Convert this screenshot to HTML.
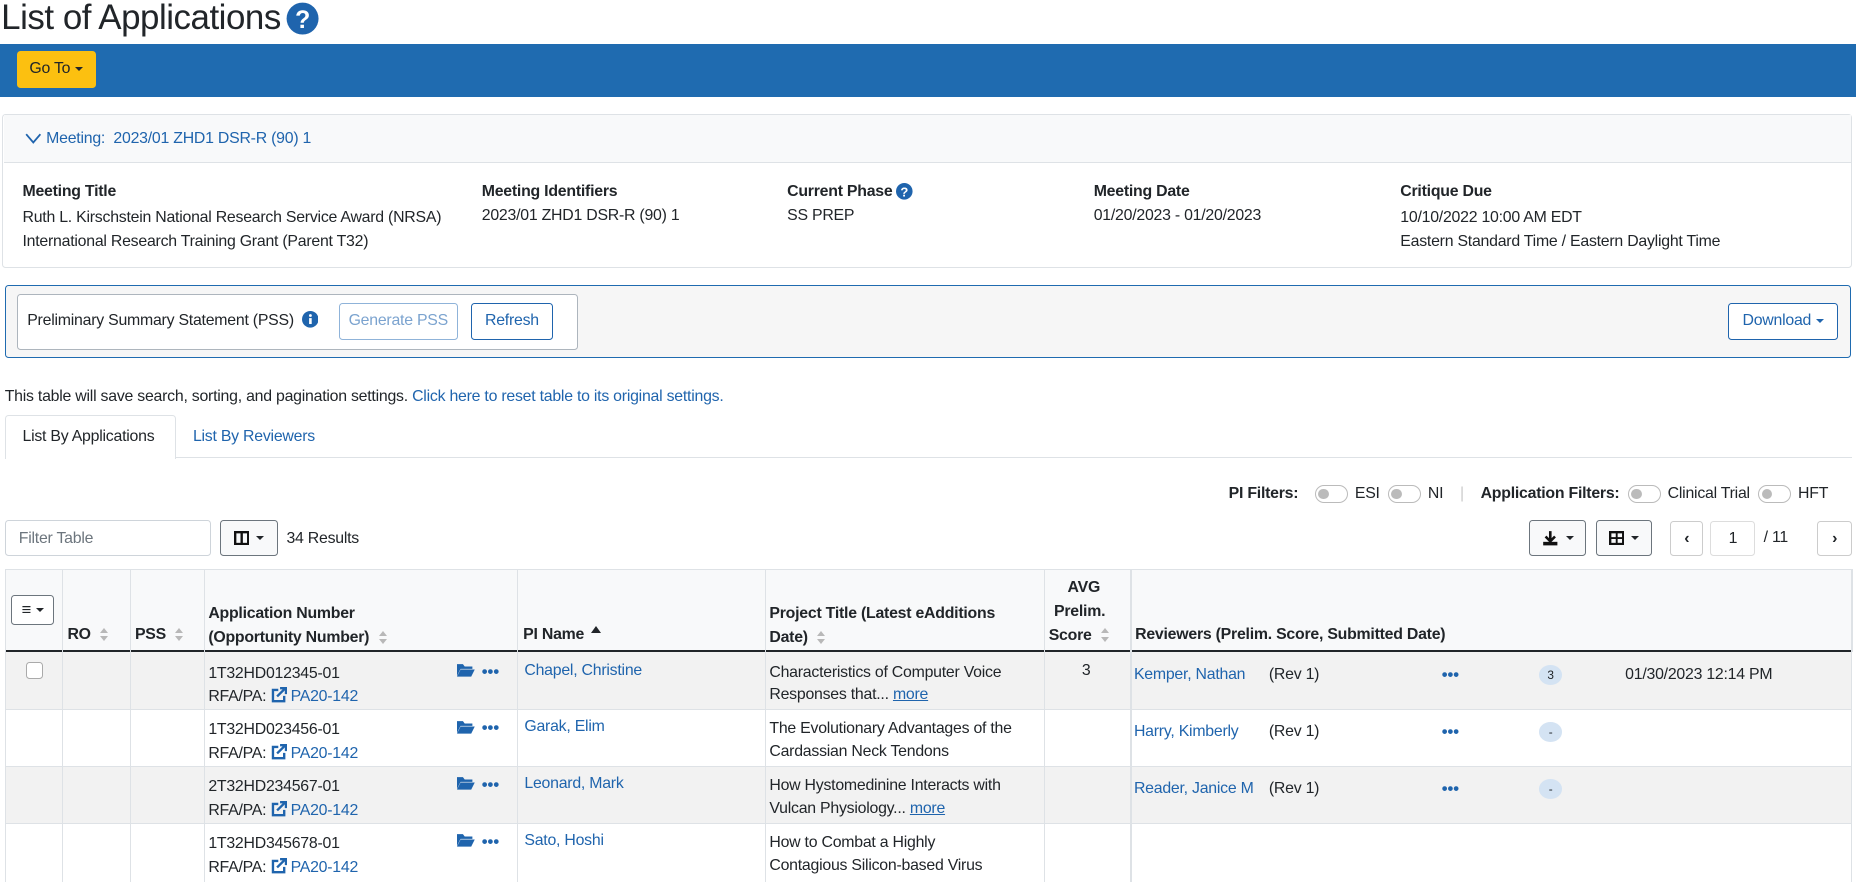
<!DOCTYPE html>
<html><head><meta charset="utf-8"><style>
html,body{margin:0;padding:0;background:#fff;overflow:hidden}
#w{position:relative;width:1568px;height:745px;zoom:1.18367;font-family:"Liberation Sans",sans-serif;font-size:13.4px;color:#212529;letter-spacing:-0.2px}
.a{position:absolute;white-space:nowrap}
.b{font-weight:bold}
.l{color:#1f64ad}
.btn{position:absolute;box-sizing:border-box;border:1px solid #6c757d;border-radius:3px;background:#f8f9fa;display:flex;align-items:center;justify-content:center}
.car{display:inline-block;width:0;height:0;border-left:4px solid transparent;border-right:4px solid transparent;border-top:4px solid #212529;margin-left:4px;vertical-align:middle}
.sort{display:inline-block;width:8px;height:12px;margin-left:8px;vertical-align:middle;position:relative}
.sort:before{content:"";position:absolute;left:0;top:0;border-left:4px solid transparent;border-right:4px solid transparent;border-bottom:5px solid #b8b8b8}
.sort:after{content:"";position:absolute;left:0;top:7px;border-left:4px solid transparent;border-right:4px solid transparent;border-top:5px solid #b8b8b8}
.up{display:inline-block;width:0;height:0;border-left:4.5px solid transparent;border-right:4.5px solid transparent;border-bottom:6px solid #212529;margin-left:6px;vertical-align:5px}
.vl{position:absolute;top:481px;height:264px;width:1px;background:#dee2e6}
.row{position:absolute;left:4px;width:1561px;border-bottom:1px solid #dee2e6}
.dots{position:absolute;color:#1f64ad;font-weight:bold;font-size:14px;letter-spacing:0}
.tg{display:inline-block;width:26px;height:13px;border:1px solid #bbb;border-radius:8px;vertical-align:middle;position:relative;margin:0 6px 0 0}
.tg:before{content:"";position:absolute;left:2px;top:2px;width:9px;height:9px;border-radius:50%;background:#bbb}
.badge{position:absolute;width:20px;height:17px;border-radius:50%;background:#d4e3f3;font-size:10px;text-align:center;line-height:17px}
.ext{display:inline-block;vertical-align:-2px;margin-right:3px}
</style></head><body><div id="w">
<div class="a" style="left:1px;top:-2px;font-size:29.5px;letter-spacing:-0.4px">List of Applications</div>
<svg class="a" style="left:242px;top:2px" width="28" height="28" viewBox="0 0 28 28"><circle cx="14" cy="14" r="13.5" fill="#1f64ad"/><text x="14" y="22" text-anchor="middle" font-family="Liberation Sans" font-weight="bold" font-size="21" fill="#fff">?</text></svg>
<div class="a" style="left:0;top:37px;width:1568px;height:45px;background:#1f6bb0"></div>
<div class="a" style="left:14px;top:43px;width:67px;height:31px;background:#fcc010;border-radius:3px;display:flex;align-items:center;justify-content:center">Go To<span class="car"></span></div>
<div class="a" style="left:2px;top:96px;width:1561px;height:129px;border:1px solid #dee2e6;border-radius:3px"></div>
<div class="a" style="left:3px;top:97px;width:1561px;height:40px;background:#f8f9fa;border-bottom:1px solid #dee2e6"></div>
<svg class="a" style="left:21px;top:112px" width="14" height="10"><path d="M1 1 L7 8 L13 1" fill="none" stroke="#1f64ad" stroke-width="1.5"/></svg>
<div class="a l" style="left:39px;top:110px">Meeting:&nbsp; 2023/01 ZHD1 DSR-R (90) 1</div>
<div class="a b" style="left:19px;top:155px">Meeting Title</div>
<div class="a" style="left:19px;top:174px;line-height:20px">Ruth L. Kirschstein National Research Service Award (NRSA)<br>International Research Training Grant (Parent T32)</div>
<div class="a b" style="left:407px;top:155px">Meeting Identifiers</div>
<div class="a" style="left:407px;top:175px">2023/01 ZHD1 DSR-R (90) 1</div>
<div class="a b" style="left:665px;top:155px">Current Phase</div>
<svg class="a" style="left:757px;top:155px" width="14" height="14"><circle cx="7" cy="7" r="7" fill="#1f64ad"/><text x="7" y="11.5" text-anchor="middle" font-family="Liberation Sans" font-weight="bold" font-size="11" fill="#fff">?</text></svg>
<div class="a" style="left:665px;top:175px">SS PREP</div>
<div class="a b" style="left:924px;top:155px">Meeting Date</div>
<div class="a" style="left:924px;top:175px">01/20/2023 - 01/20/2023</div>
<div class="a b" style="left:1183px;top:155px">Critique Due</div>
<div class="a" style="left:1183px;top:174px;line-height:20px">10/10/2022 10:00 AM EDT<br>Eastern Standard Time / Eastern Daylight Time</div>
<div class="a" style="left:4px;top:241px;width:1558px;height:60px;border:1px solid #1f6bb0;border-radius:3px;background:#f6f6f6"></div>
<div class="a" style="left:14px;top:248px;width:473px;height:46px;border:1px solid #adb5bd;border-radius:3px;background:#fff"></div>
<div class="a" style="left:23px;top:264px">Preliminary Summary Statement (PSS)</div>
<svg class="a" style="left:255px;top:263px" width="14" height="14"><circle cx="7" cy="7" r="7" fill="#1f64ad"/><rect x="6" y="6" width="2.2" height="5" fill="#fff"/><circle cx="7.1" cy="3.8" r="1.2" fill="#fff"/></svg>
<div class="btn" style="left:286px;top:256px;width:101px;height:31px;background:#fff;border-color:#8fb3d9;color:#7ba3cf">Generate PSS</div>
<div class="btn" style="left:398px;top:256px;width:69px;height:31px;background:#fff;border-color:#1f64ad;color:#1f64ad">Refresh</div>
<div class="btn" style="left:1460px;top:256px;width:93px;height:31px;background:#fff;border-color:#1f64ad;color:#1f64ad">Download<span class="car" style="border-top-color:#1f64ad"></span></div>
<div class="a" style="left:4px;top:328px">This table will save search, sorting, and pagination settings. <span class="l">Click here to reset table to its original settings.</span></div>
<div class="a" style="left:4px;top:386px;width:1561px;height:1px;background:#dee2e6"></div>
<div class="a" style="left:4px;top:351px;width:143px;height:36px;border:1px solid #dee2e6;border-bottom:none;border-radius:3px 3px 0 0;background:#fff"></div>
<div class="a" style="left:19px;top:362px">List By Applications</div>
<div class="a l" style="left:163px;top:362px">List By Reviewers</div>
<div class="a" style="left:1038px;top:410px"><span class="b">PI Filters:</span>&nbsp;&nbsp;&nbsp;&nbsp;<span class="tg"></span>ESI&nbsp;&nbsp;<span class="tg"></span>NI&nbsp;&nbsp;&nbsp;&nbsp;<span style="color:#ccc">|</span>&nbsp;&nbsp;&nbsp;&nbsp;<span class="b">Application Filters:</span>&nbsp;&nbsp;<span class="tg"></span>Clinical Trial&nbsp;&nbsp;<span class="tg"></span>HFT</div>
<div class="a" style="left:4px;top:439px;width:174px;height:31px;border:1px solid #ced4da;border-radius:3px;box-sizing:border-box;padding:8px 11px;color:#6c757d">Filter Table</div>
<div class="btn" style="left:186px;top:439px;width:49px;height:31px"><svg width="13" height="12"><rect x="1" y="1" width="11" height="10" fill="none" stroke="#111" stroke-width="2"/><rect x="5.5" y="1" width="2" height="10" fill="#111"/></svg><span class="car" style="margin-left:6px"></span></div>
<div class="a" style="left:242px;top:448px">34 Results</div>
<div class="btn" style="left:1292px;top:439px;width:48px;height:31px"><svg width="14" height="14"><path d="M7 1v8M3 5.5l4 4 4-4" stroke="#111" stroke-width="2.2" fill="none"/><rect x="1" y="10" width="12" height="3" fill="#111"/></svg><span class="car" style="margin-left:6px"></span></div>
<div class="btn" style="left:1348px;top:439px;width:48px;height:31px"><svg width="13" height="12"><rect x="1" y="1" width="11" height="10" fill="none" stroke="#111" stroke-width="2"/><path d="M6.5 1v10M1 6h11" stroke="#111" stroke-width="1.6"/></svg><span class="car" style="margin-left:6px"></span></div>
<div class="btn" style="left:1411px;top:440px;width:28px;height:30px;border-color:#ccc;background:#fff;font-weight:bold">‹</div>
<div class="btn" style="left:1445px;top:440px;width:38px;height:30px;border-color:#ddd;background:#fff">1</div>
<div class="a" style="left:1490px;top:447px">/ 11</div>
<div class="btn" style="left:1535px;top:440px;width:30px;height:30px;border-color:#ccc;background:#fff;font-weight:bold">›</div>
<div class="a" style="left:4px;top:481px;width:1560px;height:69px;background:#f8f9fa;border:1px solid #dee2e6;border-bottom:none"></div>
<div class="a" style="left:4px;top:549px;width:1561px;height:2px;background:#212529"></div>
<div class="row" style="top:551px;height:48px;background:#f2f2f2"></div>
<div class="row" style="top:600px;height:47px;background:#fff"></div>
<div class="row" style="top:648px;height:47px;background:#f2f2f2"></div>
<div class="row" style="top:696px;height:49px;background:#fff;border:none"></div>
<div class="vl" style="left:4px"></div><div class="vl" style="left:52px"></div><div class="vl" style="left:110px"></div><div class="vl" style="left:172px"></div><div class="vl" style="left:437px"></div><div class="vl" style="left:646px"></div><div class="vl" style="left:882px"></div><div class="vl" style="left:955px"></div><div class="vl" style="left:1564px"></div>
<div class="btn" style="left:9px;top:503px;width:37px;height:25px;background:#fff"><span style="font-size:14px;font-weight:bold">≡</span><span class="car"></span></div>
<div class="a b" style="left:57px;top:529px">RO<span class="sort"></span></div>
<div class="a b" style="left:114px;top:529px">PSS<span class="sort"></span></div>
<div class="a b" style="left:176px;top:509px;line-height:20px">Application Number<br>(Opportunity Number)<span class="sort"></span></div>
<div class="a b" style="left:442px;top:529px">PI Name<span class="up"></span></div>
<div class="a b" style="left:650px;top:509px;line-height:20px">Project Title (Latest eAdditions<br>Date)<span class="sort"></span></div>
<div class="a b" style="left:886px;top:487px;line-height:20px;text-align:center">&nbsp;&nbsp;AVG<br>Prelim.<br>Score<span class="sort"></span></div>
<div class="a b" style="left:959px;top:529px">Reviewers (Prelim. Score, Submitted Date)</div>
<div class="a" style="left:22px;top:559px;width:13px;height:13px;border:1px solid #aaa;border-radius:3px;background:#fff"></div>

<div class="a" style="left:176px;top:559px;line-height:20px">1T32HD012345-01<br>RFA/PA: <span class="l"><svg class="ext" width="14" height="14"><path d="M7 2.5H2.5v9.5h9.5V7.5" fill="none" stroke="#1f64ad" stroke-width="2"/><path d="M6 8l6.5-6.5M8.5 1h5v5" fill="none" stroke="#1f64ad" stroke-width="2"/></svg>PA20-142</span></div>
<div class="a" style="left:176px;top:607px;line-height:20px">1T32HD023456-01<br>RFA/PA: <span class="l"><svg class="ext" width="14" height="14"><path d="M7 2.5H2.5v9.5h9.5V7.5" fill="none" stroke="#1f64ad" stroke-width="2"/><path d="M6 8l6.5-6.5M8.5 1h5v5" fill="none" stroke="#1f64ad" stroke-width="2"/></svg>PA20-142</span></div>
<div class="a" style="left:176px;top:655px;line-height:20px">2T32HD234567-01<br>RFA/PA: <span class="l"><svg class="ext" width="14" height="14"><path d="M7 2.5H2.5v9.5h9.5V7.5" fill="none" stroke="#1f64ad" stroke-width="2"/><path d="M6 8l6.5-6.5M8.5 1h5v5" fill="none" stroke="#1f64ad" stroke-width="2"/></svg>PA20-142</span></div>
<div class="a" style="left:176px;top:703px;line-height:20px">1T32HD345678-01<br>RFA/PA: <span class="l"><svg class="ext" width="14" height="14"><path d="M7 2.5H2.5v9.5h9.5V7.5" fill="none" stroke="#1f64ad" stroke-width="2"/><path d="M6 8l6.5-6.5M8.5 1h5v5" fill="none" stroke="#1f64ad" stroke-width="2"/></svg>PA20-142</span></div>

<svg class="a" style="left:386px;top:560px" width="15" height="12"><path d="M0 1h5l1.5 2H13v2H3L0 11z M3 5.5h12l-3 6H0z" fill="#1f64ad"/></svg>
<svg class="a" style="left:386px;top:608px" width="15" height="12"><path d="M0 1h5l1.5 2H13v2H3L0 11z M3 5.5h12l-3 6H0z" fill="#1f64ad"/></svg>
<svg class="a" style="left:386px;top:656px" width="15" height="12"><path d="M0 1h5l1.5 2H13v2H3L0 11z M3 5.5h12l-3 6H0z" fill="#1f64ad"/></svg>
<svg class="a" style="left:386px;top:704px" width="15" height="12"><path d="M0 1h5l1.5 2H13v2H3L0 11z M3 5.5h12l-3 6H0z" fill="#1f64ad"/></svg>
<div class="dots" style="left:407px;top:559px">•••</div><div class="dots" style="left:407px;top:607px">•••</div><div class="dots" style="left:407px;top:655px">•••</div><div class="dots" style="left:407px;top:703px">•••</div>

<div class="a l" style="left:443px;top:559px">Chapel, Christine</div>
<div class="a l" style="left:443px;top:607px">Garak, Elim</div>
<div class="a l" style="left:443px;top:655px">Leonard, Mark</div>
<div class="a l" style="left:443px;top:703px">Sato, Hoshi</div>

<div class="a" style="left:650px;top:559px;line-height:19px">Characteristics of Computer Voice<br>Responses that... <span class="l" style="text-decoration:underline">more</span></div>
<div class="a" style="left:650px;top:607px;line-height:19px">The Evolutionary Advantages of the<br>Cardassian Neck Tendons</div>
<div class="a" style="left:650px;top:655px;line-height:19px">How Hystomedinine Interacts with<br>Vulcan Physiology... <span class="l" style="text-decoration:underline">more</span></div>
<div class="a" style="left:650px;top:703px;line-height:19px">How to Combat a Highly<br>Contagious Silicon-based Virus</div>
<div class="a" style="left:914px;top:559px">3</div>

<div class="a l" style="left:958px;top:563px">Kemper, Nathan</div><div class="a" style="left:1072px;top:563px">(Rev 1)</div>
<div class="a l" style="left:958px;top:611px">Harry, Kimberly</div><div class="a" style="left:1072px;top:611px">(Rev 1)</div>
<div class="a l" style="left:958px;top:659px">Reader, Janice M</div><div class="a" style="left:1072px;top:659px">(Rev 1)</div>
<div class="dots" style="left:1218px;top:562px">•••</div><div class="dots" style="left:1218px;top:610px">•••</div><div class="dots" style="left:1218px;top:658px">•••</div>
<div class="badge" style="left:1300px;top:562px">3</div><div class="badge" style="left:1300px;top:610px">-</div><div class="badge" style="left:1300px;top:658px">-</div>
<div class="a" style="left:1373px;top:563px">01/30/2023 12:14 PM</div>
</div></body></html>
